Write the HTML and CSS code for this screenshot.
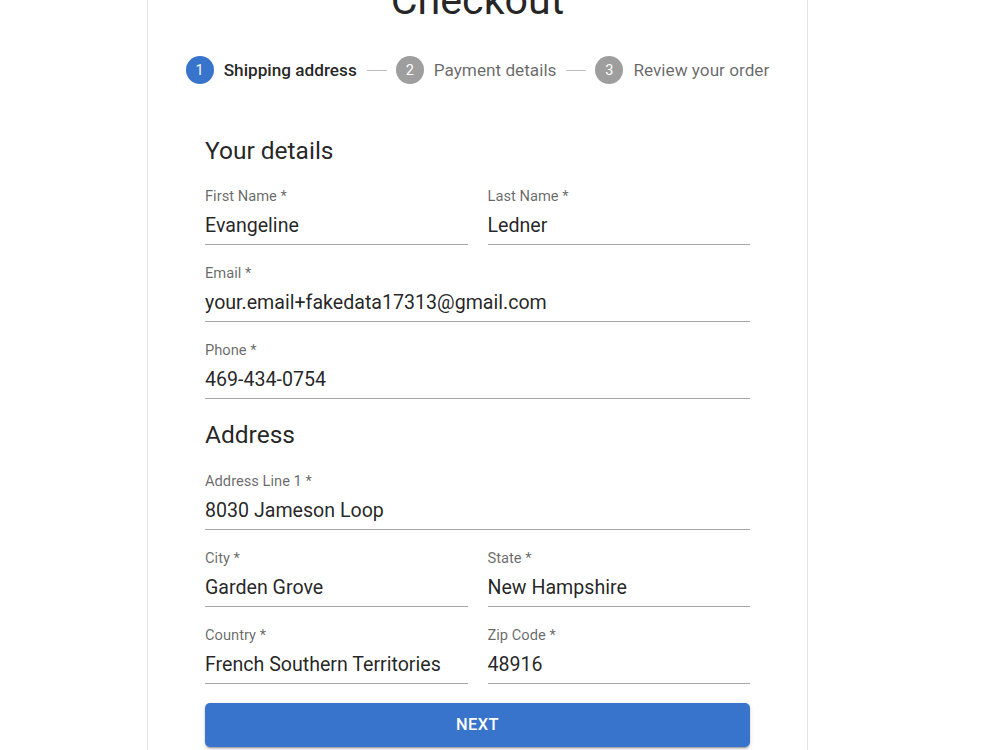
FILE: index.html
```html
<!DOCTYPE html>
<html lang="en">
<head>
<meta charset="utf-8">
<title>Checkout</title>
<link rel="stylesheet" href="styles.css">
</head>
<body>
<main class="card">
  <h1 class="title">Checkout</h1>
  <ol class="stepper">
    <li class="step active"><span class="dot">1</span><span class="step-label">Shipping address</span></li>
    <li class="connector"></li>
    <li class="step"><span class="dot">2</span><span class="step-label">Payment details</span></li>
    <li class="connector"></li>
    <li class="step"><span class="dot">3</span><span class="step-label">Review your order</span></li>
  </ol>
  <form class="form">
    <h2 class="section">Your details</h2>
    <div class="row two">
      <label class="field"><span class="label">First Name *</span><span class="value">Evangeline</span></label>
      <label class="field"><span class="label">Last Name *</span><span class="value">Ledner</span></label>
    </div>
    <div class="row">
      <label class="field"><span class="label">Email *</span><span class="value">your.email+fakedata17313@gmail.com</span></label>
    </div>
    <div class="row">
      <label class="field"><span class="label">Phone *</span><span class="value">469-434-0754</span></label>
    </div>
    <h2 class="section second">Address</h2>
    <div class="row">
      <label class="field"><span class="label">Address Line 1 *</span><span class="value">8030 Jameson Loop</span></label>
    </div>
    <div class="row two">
      <label class="field"><span class="label">City *</span><span class="value">Garden Grove</span></label>
      <label class="field"><span class="label">State *</span><span class="value">New Hampshire</span></label>
    </div>
    <div class="row two last">
      <label class="field"><span class="label">Country *</span><span class="value">French Southern Territories</span></label>
      <label class="field"><span class="label">Zip Code *</span><span class="value">48916</span></label>
    </div>
    <button type="button" class="next">NEXT</button>
  </form>
</main>
</body>
</html>
```

FILE: styles.css
```css
html, body {
  margin: 0;
  padding: 0;
  background: #ffffff;
  overflow: hidden;
}
body {
  font-family: Roboto, "Liberation Sans", Arial, sans-serif;
  color: rgba(0, 0, 0, 0.87);
}
.card {
  box-sizing: border-box;
  width: 661px;
  margin: -41px 0 0 147px;
  padding: 16px 0 40px;
  border: 1px solid #e4e4e4;
  background: #fff;
  min-height: 900px;
}
.title {
  margin: 0;
  text-align: center;
  font-size: 41.2px;
  font-weight: 400;
  line-height: 49px;
  color: rgba(0, 0, 0, 0.87);
}
.stepper {
  list-style: none;
  margin: 31px 0 0;
  padding: 0;
  display: flex;
  justify-content: center;
  align-items: center;
  height: 28px;
}
.step {
  display: flex;
  align-items: center;
  gap: 10px;
}
.dot {
  width: 28px;
  height: 28px;
  border-radius: 50%;
  background: #9e9e9e;
  color: #fff;
  font-size: 14.5px;
  display: flex;
  align-items: center;
  justify-content: center;
}
.step.active .dot {
  background: #3874cb;
}
.step-label {
  font-size: 17.2px;
  color: rgba(0, 0, 0, 0.6);
}
.step.active .step-label {
  color: rgba(0, 0, 0, 0.87);
  font-weight: 500;
}
.connector {
  width: 20px;
  margin: 0 9px 0 10px;
  border-top: 1px solid #bdbdbd;
}
.form {
  margin: 50.5px 0 0;
  padding: 0 57px;
  display: flex;
  flex-direction: column;
}
.section {
  margin: 0 0 21.5px;
  font-size: 24.5px;
  font-weight: 400;
  line-height: 32px;
  color: rgba(0, 0, 0, 0.87);
}
.section.second {
  margin-bottom: 22px;
}
.row {
  display: grid;
  grid-template-columns: 1fr;
  margin-bottom: 20px;
}
.row.two {
  grid-template-columns: 1fr 1fr;
  column-gap: 20px;
}
.row.last {
  margin-bottom: 18.5px;
}
.field {
  display: flex;
  flex-direction: column;
  border-bottom: 1px solid #a6a6a6;
  padding-bottom: 7px;
}
.label {
  font-size: 14.7px;
  line-height: 17px;
  color: rgba(0, 0, 0, 0.6);
  margin-bottom: 9px;
}
.value {
  font-size: 19.6px;
  line-height: 23px;
  color: rgba(0, 0, 0, 0.87);
  white-space: nowrap;
}
.next {
  height: 44px;
  border: 0;
  border-radius: 5px;
  background: #3874cb;
  color: #fff;
  font-family: Roboto, "Liberation Sans", Arial, sans-serif;
  font-size: 16.4px;
  font-weight: 500;
  letter-spacing: 0.5px;
  box-shadow: 0 3px 1px -2px rgba(0,0,0,0.2), 0 2px 2px 0 rgba(0,0,0,0.14), 0 1px 5px 0 rgba(0,0,0,0.12);
}
```
